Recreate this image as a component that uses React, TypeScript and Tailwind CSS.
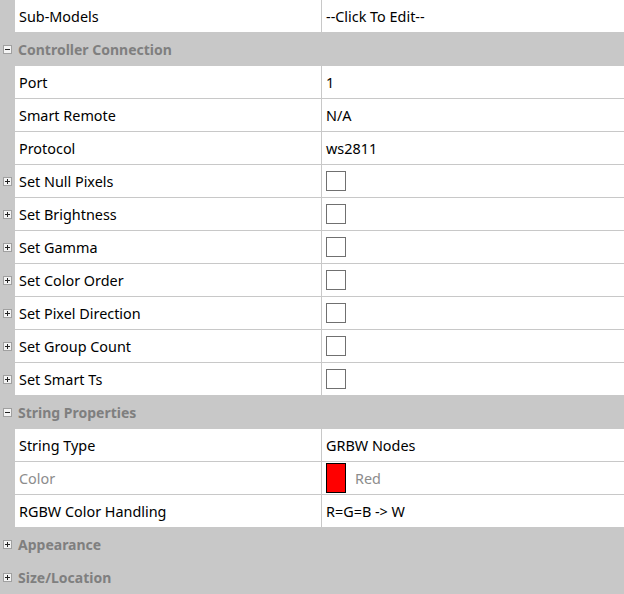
import React from "react";

type Row =
  | { kind: "cat"; label: string; open: boolean }
  | {
      kind: "prop";
      label: string;
      value?: string;
      expander?: boolean;
      check?: boolean;
      disabled?: boolean;
      swatch?: string;
    };

const ROWS: Row[] = [
  { kind: "prop", label: "Sub-Models", value: "--Click To Edit--" },
  { kind: "cat", label: "Controller Connection", open: true },
  { kind: "prop", label: "Port", value: "1" },
  { kind: "prop", label: "Smart Remote", value: "N/A" },
  { kind: "prop", label: "Protocol", value: "ws2811" },
  { kind: "prop", label: "Set Null Pixels", expander: true, check: true },
  { kind: "prop", label: "Set Brightness", expander: true, check: true },
  { kind: "prop", label: "Set Gamma", expander: true, check: true },
  { kind: "prop", label: "Set Color Order", expander: true, check: true },
  { kind: "prop", label: "Set Pixel Direction", expander: true, check: true },
  { kind: "prop", label: "Set Group Count", expander: true, check: true },
  { kind: "prop", label: "Set Smart Ts", expander: true, check: true },
  { kind: "cat", label: "String Properties", open: true },
  { kind: "prop", label: "String Type", value: "GRBW Nodes" },
  { kind: "prop", label: "Color", value: "Red", disabled: true, swatch: "#ff0000" },
  { kind: "prop", label: "RGBW Color Handling", value: "R=G=B -> W" },
  { kind: "cat", label: "Appearance", open: false },
  { kind: "cat", label: "Size/Location", open: false },
];

function Toggle({ open }: { open: boolean }) {
  return (
    <span className="flex h-[9px] w-[9px] items-center justify-center border border-[#a0a0a0] bg-[#f4f4f4]">
      <svg width="7" height="7" viewBox="0 0 7 7">
        <rect x="1" y="3" width="5" height="1" fill="#222" />
        {!open && <rect x="3" y="1" width="1" height="5" fill="#222" />}
      </svg>
    </span>
  );
}

export default function App() {
  return (
    <div
      className="w-[624px] h-[594px] overflow-hidden bg-[#c8c8c8] text-[14.4px] text-black"
      style={{ fontFamily: '"Noto Sans", "Open Sans", sans-serif' }}
    >
      {ROWS.map((row, i) =>
        row.kind === "cat" ? (
          <div key={i} className="flex h-[33px] items-center bg-[#c8c8c8]">
            <div className="flex w-[18px] justify-start pl-[3px]">
              <Toggle open={row.open} />
            </div>
            <span className="text-[14px] font-bold text-[#7f7f7f]">{row.label}</span>
          </div>
        ) : (
          <div key={i} className="flex h-[33px]">
            <div className="flex w-[15px] items-center pl-[3px]">
              {row.expander && <Toggle open={false} />}
            </div>
            <div className="flex flex-1 border-b border-[#c8c8c8] bg-white">
              <div
                className={`flex w-[307px] items-center border-r border-[#c8c8c8] pl-[4px] pt-[2px] ${
                  row.disabled ? "text-[#8c8c8c]" : ""
                }`}
              >
                {row.label}
              </div>
              <div className="flex flex-1 items-center pl-[4px]">
                {row.check && (
                  <span className="h-[20px] w-[20px] border border-[#707070] bg-white" />
                )}
                {row.swatch && (
                  <span className="mr-[9px] h-[30px] w-[20px] border border-black bg-[#ff0000]" />
                )}
                {row.value && (
                  <span className={`pt-[2px] ${row.disabled ? "text-[#8c8c8c]" : ""}`}>
                    {row.value}
                  </span>
                )}
              </div>
            </div>
          </div>
        )
      )}
    </div>
  );
}
